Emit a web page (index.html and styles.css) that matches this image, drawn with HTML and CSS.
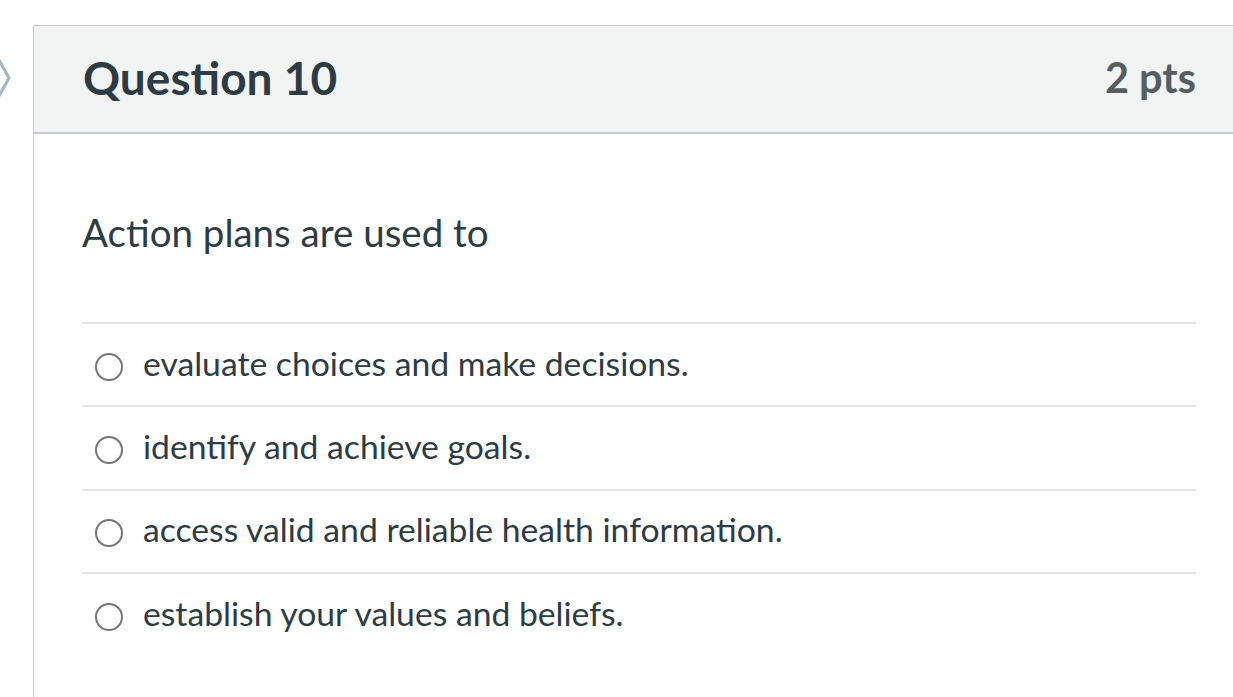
FILE: index.html
```html
<!DOCTYPE html>
<html lang="en">
<head>
<meta charset="utf-8">
<title>Question 10</title>
<link rel="stylesheet" href="styles.css">
</head>
<body>
<div class="page">
  <div class="side">
    <svg class="chev" width="14" height="44" viewBox="0 0 14 44"><path d="M0 4 L10 22 L0 40" fill="none" stroke="#9fb6c6" stroke-width="3"/></svg>
  </div>
  <section class="question">
    <header class="q-header">
      <h2 class="q-title">Question 10</h2>
      <span class="q-pts">2 pts</span>
    </header>
    <div class="q-body">
      <p class="q-text">Action plans are used to</p>
      <ul class="answers">
        <li class="answer"><span class="radio"></span><span class="a-text">evaluate choices and make decisions.</span></li>
        <li class="answer"><span class="radio"></span><span class="a-text">identify and achieve goals.</span></li>
        <li class="answer"><span class="radio"></span><span class="a-text">access valid and reliable health information.</span></li>
        <li class="answer"><span class="radio"></span><span class="a-text">establish your values and beliefs.</span></li>
      </ul>
    </div>
  </section>
</div>
</body>
</html>
```
FILE: styles.css
```css
html, body {
  margin: 0;
  padding: 0;
  background: #ffffff;
  overflow: hidden;
}
body {
  font-family: Lato, "Noto Sans", sans-serif;
  color: #2d3b45;
  width: 1233px;
  height: 697px;
}
.page {
  display: flex;
  padding-top: 25px;
  height: 672px;
}
.side {
  width: 33px;
  flex: none;
  position: relative;
}
.chev {
  position: absolute;
  left: -1px;
  top: 31px;
}
.question {
  flex: 1;
  border: 1px solid #c7cdd1;
  border-right: none;
  border-bottom: none;
  margin-right: -10px;
}
.q-header {
  display: flex;
  justify-content: space-between;
  align-items: center;
  background: #f2f4f4;
  border-bottom: 2px solid #c7cdd1;
  height: 106px;
  padding: 0 47px 0 49px;
}
.q-title {
  margin: 0;
  font-size: 46px;
  font-weight: 700;
  color: #2d3b45;
  position: relative;
  top: -2px;
}
.q-pts {
  font-size: 41.5px;
  font-weight: 700;
  color: #555e63;
  position: relative;
  top: -2px;
}
.q-body {
  padding: 0 47px 0 48px;
}
.q-text {
  margin: 0;
  padding-top: 76px;
  padding-bottom: 68px;
  font-size: 38.5px;
  line-height: 44px;
}
.answers {
  list-style: none;
  margin: 0;
  padding: 0;
}
.answer {
  display: flex;
  align-items: center;
  gap: 20px;
  height: 81.33px;
  border-top: 2px solid #e3e5e6;
  padding-left: 13px;
}
.radio {
  width: 24px;
  height: 24px;
  border: 2.5px solid #767676;
  border-radius: 50%;
  flex: none;
  position: relative;
  top: 2px;
}
.a-text {
  font-size: 33.7px;
  position: relative;
  top: -2px;
}
```
